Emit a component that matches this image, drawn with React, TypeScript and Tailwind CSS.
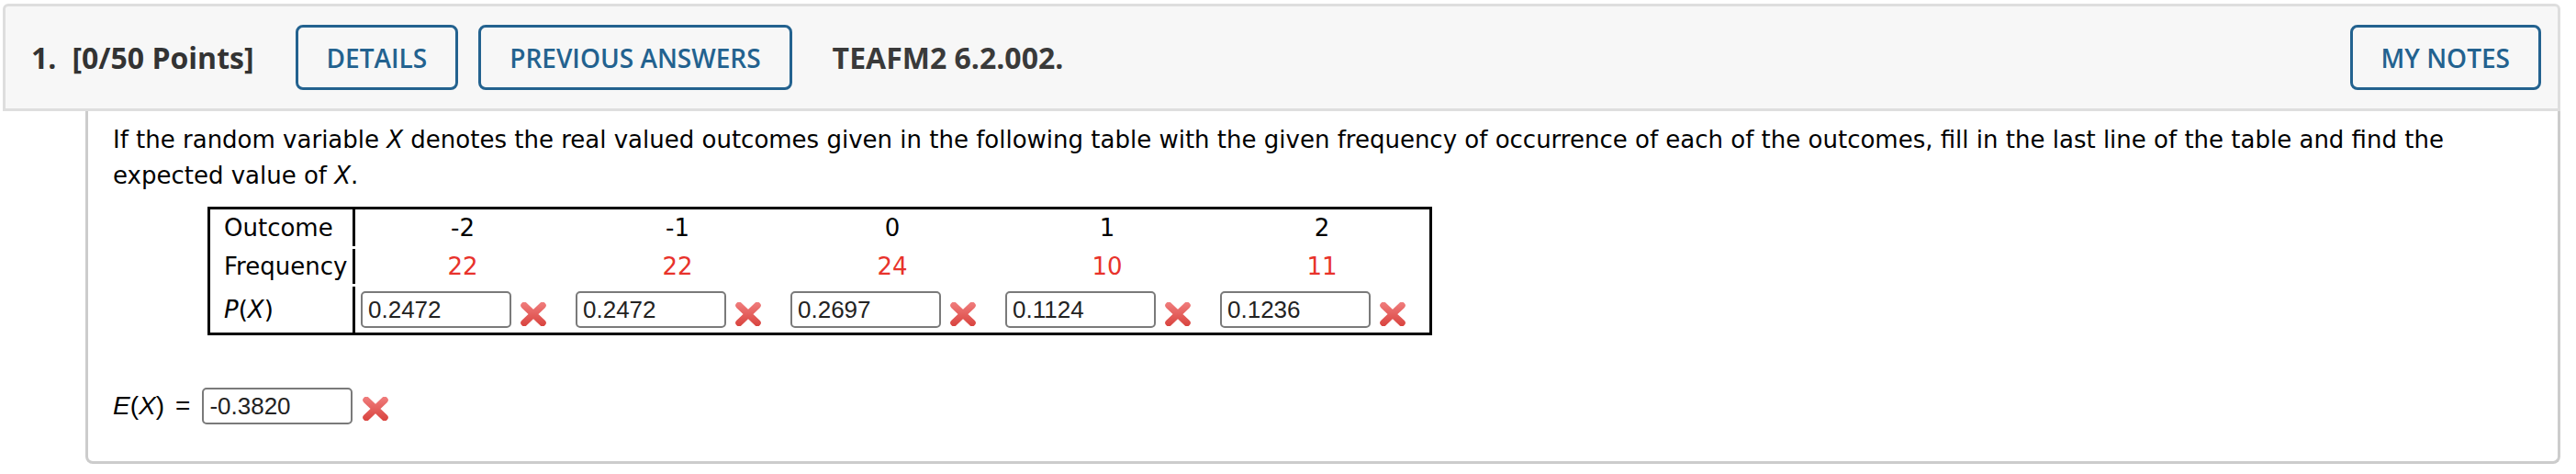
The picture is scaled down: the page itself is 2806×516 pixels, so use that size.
import React from "react";

const XMark = ({ className = "" }: { className?: string }) => (
  <svg width="28" height="26" viewBox="0 0 28 26" className={className}>
    <defs>
      <linearGradient id="xgrad" x1="0" y1="0" x2="0" y2="26" gradientUnits="userSpaceOnUse">
        <stop offset="0" stopColor="#f07d7d" />
        <stop offset="1" stopColor="#d9443f" />
      </linearGradient>
    </defs>
    <path d="M4 3.5 L24 22.5 M24 3.5 L4 22.5" stroke="url(#xgrad)" strokeWidth="7.5" strokeLinecap="round" fill="none" />
  </svg>
);

const Field = ({ value }: { value: string }) => (
  <div className="w-[164px] h-[40px] border-2 border-[#7a7a7a] rounded-[5px] bg-white flex items-center pl-[6px] text-[26px] text-[#222] font-['Liberation_Sans',Arial,sans-serif]">
    {value}
  </div>
);

const outcomes = ["-2", "-1", "0", "1", "2"];
const freqs = ["22", "22", "24", "10", "11"];
const probs = ["0.2472", "0.2472", "0.2697", "0.1124", "0.1236"];

const Btn = ({ children }: { children: React.ReactNode }) => (
  <div className="h-[71px] border-[3px] border-[#23628f] rounded-[8px] px-[31px] flex items-center text-[28px] font-semibold text-[#23628f] font-['Open_Sans',sans-serif] bg-[#f7f7f7]">
    {children}
  </div>
);

export default function App() {
  return (
    <div className="w-[2806px] h-[516px] bg-white overflow-hidden">
      <div className="ml-[3px] pt-[4px] w-[2786px]">
        <div className="h-[117px] border-[3px] border-[#dedede] bg-[#f7f7f7] rounded-t-[6px] flex items-center pl-[28px] pr-[18px] font-['Open_Sans',sans-serif] text-[#333333]">
          <span className="text-[32px] font-bold">1.</span>
          <span className="text-[32px] font-bold ml-[17px]">[0/50 Points]</span>
          <div className="ml-[45px] flex gap-[22px]">
            <Btn>DETAILS</Btn>
            <Btn>PREVIOUS ANSWERS</Btn>
          </div>
          <span className="ml-[44px] text-[32px] font-bold text-[#3a3a3a]">TEAFM2 6.2.002.</span>
          <div className="ml-auto">
            <Btn>MY NOTES</Btn>
          </div>
        </div>
        <div className="ml-[90px] h-[384px] border-l-[3px] border-r-[3px] border-b-[3px] border-[#cccccc] rounded-b-[8px] pt-[12px] pl-[27px] font-['DejaVu_Sans',Verdana,sans-serif] text-black">
          <p className="text-[26px] leading-[39px]">
            If the random variable <i>X</i> denotes the real valued outcomes given in the following table with the given frequency of occurrence of each of the outcomes, fill in the last line of the table and find the
            <br />
            expected value of <i>X</i>.
          </p>
          <div className="mt-[14px] ml-[103px] w-[1334px] border-[3px] border-black flex flex-col gap-[3px] text-[26px]">
            <div className="flex h-[40px] items-center">
              <div className="w-[158px] h-full border-r-[3px] border-black pl-[15px] flex items-center">Outcome</div>
              {outcomes.map((o, i) => (
                <div key={i} className="w-[234px] text-center">{o}</div>
              ))}
            </div>
            <div className="flex h-[38px] items-center">
              <div className="w-[158px] h-full border-r-[3px] border-black pl-[15px] flex items-center">Frequency</div>
              {freqs.map((f, i) => (
                <div key={i} className="w-[234px] text-center text-[#e8322b]">{f}</div>
              ))}
            </div>
            <div className="flex h-[50px] items-center">
              <div className="w-[158px] h-full border-r-[3px] border-black pl-[15px] flex items-center">
                <i>P</i>(<i>X</i>)
              </div>
              {probs.map((p, i) => (
                <div key={i} className="w-[234px] pl-[6px] flex items-center">
                  <Field value={p} />
                  <XMark className="ml-[10px] mt-[10px]" />
                </div>
              ))}
            </div>
          </div>
          <div className="mt-[56px] flex items-center font-['Liberation_Sans',Arial,sans-serif]">
            <span className="text-[28px]">
              <i>E</i>(<i>X</i>)
            </span>
            <span className="text-[28px] ml-[12px] mr-[13px]">=</span>
            <Field value="-0.3820" />
            <XMark className="ml-[11px] mt-[6px]" />
          </div>
        </div>
      </div>
    </div>
  );
}
